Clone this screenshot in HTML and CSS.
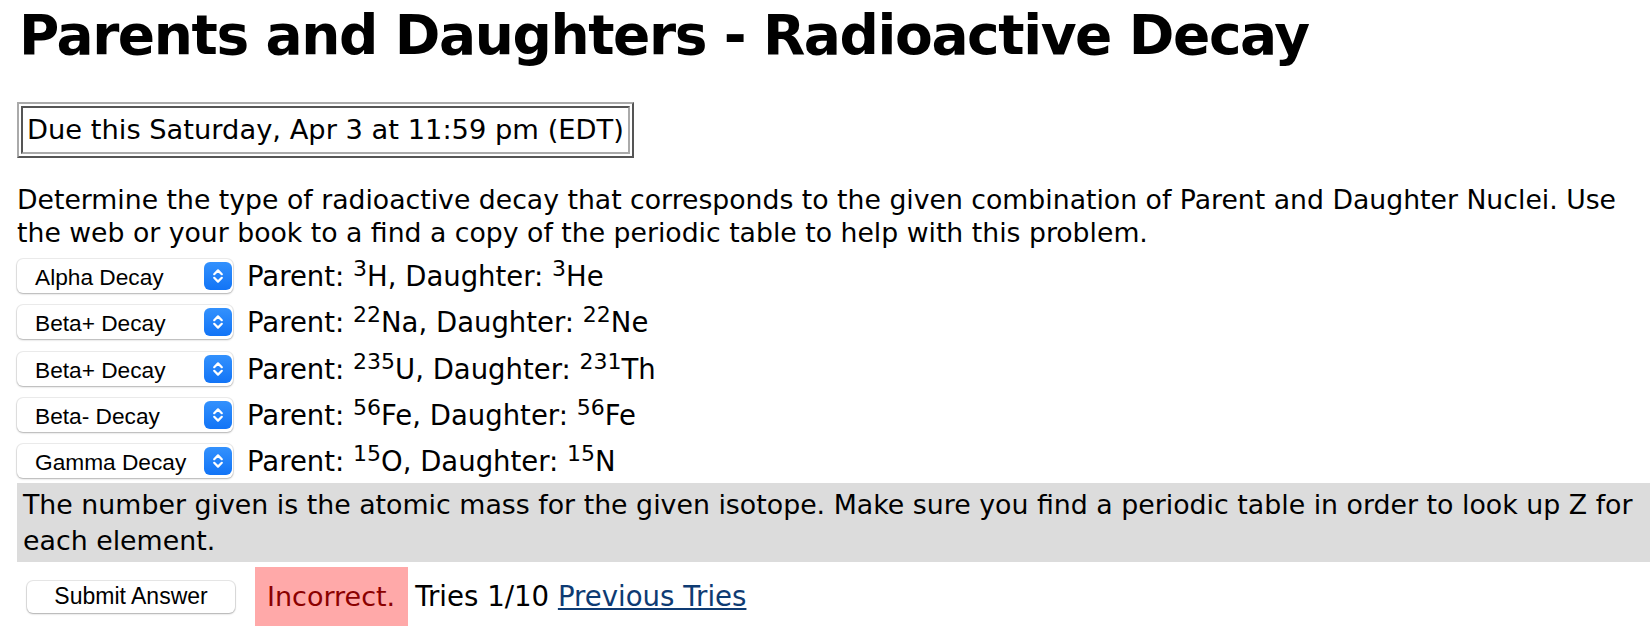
FILE: index.html
```html
<!DOCTYPE html>
<html>
<head>
<meta charset="utf-8">
<link rel="stylesheet" href="styles.css">
</head>
<body>
<h1 class="title">Parents and Daughters - Radioactive Decay</h1>
<table class="due"><tr><td class="due-cell">Due this Saturday, Apr 3 at 11:59 pm (EDT)</td></tr></table>
<p class="desc">Determine the type of radioactive decay that corresponds to the given combination of Parent and Daughter Nuclei. Use the web or your book to a find a copy of the periodic table to help with this problem.</p>
<div class="rows">
  <div class="row">
    <div class="sel"><span class="sel-text">Alpha Decay</span><span class="stepper"><svg width="16" height="20" viewBox="0 0 16 20"><path d="M4.2 8.2 L8 4.4 L11.8 8.2 M4.2 11.8 L8 15.6 L11.8 11.8" fill="none" stroke="#fff" stroke-width="2.2" stroke-linecap="round" stroke-linejoin="round"/></svg></span></div>
    <span class="q">Parent: <sup>3</sup>H, Daughter: <sup>3</sup>He</span>
  </div>
  <div class="row">
    <div class="sel"><span class="sel-text">Beta+ Decay</span><span class="stepper"><svg width="16" height="20" viewBox="0 0 16 20"><path d="M4.2 8.2 L8 4.4 L11.8 8.2 M4.2 11.8 L8 15.6 L11.8 11.8" fill="none" stroke="#fff" stroke-width="2.2" stroke-linecap="round" stroke-linejoin="round"/></svg></span></div>
    <span class="q">Parent: <sup>22</sup>Na, Daughter: <sup>22</sup>Ne</span>
  </div>
  <div class="row">
    <div class="sel"><span class="sel-text">Beta+ Decay</span><span class="stepper"><svg width="16" height="20" viewBox="0 0 16 20"><path d="M4.2 8.2 L8 4.4 L11.8 8.2 M4.2 11.8 L8 15.6 L11.8 11.8" fill="none" stroke="#fff" stroke-width="2.2" stroke-linecap="round" stroke-linejoin="round"/></svg></span></div>
    <span class="q">Parent: <sup>235</sup>U, Daughter: <sup>231</sup>Th</span>
  </div>
  <div class="row">
    <div class="sel"><span class="sel-text">Beta- Decay</span><span class="stepper"><svg width="16" height="20" viewBox="0 0 16 20"><path d="M4.2 8.2 L8 4.4 L11.8 8.2 M4.2 11.8 L8 15.6 L11.8 11.8" fill="none" stroke="#fff" stroke-width="2.2" stroke-linecap="round" stroke-linejoin="round"/></svg></span></div>
    <span class="q">Parent: <sup>56</sup>Fe, Daughter: <sup>56</sup>Fe</span>
  </div>
  <div class="row">
    <div class="sel"><span class="sel-text">Gamma Decay</span><span class="stepper"><svg width="16" height="20" viewBox="0 0 16 20"><path d="M4.2 8.2 L8 4.4 L11.8 8.2 M4.2 11.8 L8 15.6 L11.8 11.8" fill="none" stroke="#fff" stroke-width="2.2" stroke-linecap="round" stroke-linejoin="round"/></svg></span></div>
    <span class="q">Parent: <sup>15</sup>O, Daughter: <sup>15</sup>N</span>
  </div>
</div>
<div class="hint">The number given is the atomic mass for the given isotope. Make sure you find a periodic table in order to look up Z for each element.</div>
<div class="submit-row">
  <span class="btn">Submit Answer</span>
  <span class="bad">Incorrect.</span>
  <span class="tries">Tries 1/10 <a class="prev" href="#">Previous Tries</a></span>
</div>
</body>
</html>
```
FILE: styles.css
```css
html, body { margin: 0; padding: 0; background: #fff; }
body {
  font-family: "DejaVu Sans", Verdana, sans-serif;
  font-size: 27px;
  color: #000;
  padding-left: 17px;
  width: 1633px;
  overflow: hidden;
}
.title {
  font-size: 55px;
  letter-spacing: -1.4px;
  font-weight: bold;
  margin: 0;
  padding-top: 2px;
  line-height: 66px;
  padding-left: 2px;
}
.due {
  margin-top: 34px;
  border-collapse: separate;
  border-spacing: 2px;
  border: 2px solid;
  border-color: #aaa #555 #555 #aaa;
  font-size: 27.3px;
}
.due-cell {
  border: 2px solid;
  border-color: #555 #aaa #aaa #555;
  padding: 0 4px;
  line-height: 44px;
}
.desc {
  margin: 25px 0 0 0;
  font-size: 26.7px;
  line-height: 33px;
}
.rows { display: flex; flex-direction: column; gap: 12.3px; margin-top: 10px; }
.row { display: flex; align-items: center; gap: 14px; }
.sel {
  width: 216px;
  height: 34px;
  box-sizing: border-box;
  background: #fff;
  border-radius: 6px;
  box-shadow: 0 0 0 1px rgba(0,0,0,0.07), 0 1px 2px rgba(0,0,0,0.25);
  display: flex;
  align-items: center;
  justify-content: space-between;
  padding: 0 1px 0 18px;
  font-family: "Liberation Sans", Arial, sans-serif;
  font-size: 22.7px;
}
.sel-text { padding-top: 3px; }
.stepper {
  width: 28px;
  height: 28px;
  border-radius: 6px;
  background: linear-gradient(#3391fd, #1274f6);
  display: flex;
  align-items: center;
  justify-content: center;
}
.q { font-size: 27.5px; line-height: 34px; }
.q sup { font-size: 0.8em; line-height: 0; }
.hint {
  margin-top: 5px;
  background: #dcdcdc;
  font-size: 26.8px;
  line-height: 35.5px;
  padding: 4px 6px;
}
.submit-row { display: flex; align-items: center; margin-top: 5px; }
.btn {
  margin-left: 10px;
  width: 208px;
  height: 32px;
  box-sizing: border-box;
  display: flex;
  align-items: center;
  justify-content: center;
  border-radius: 6px;
  background: #fff;
  box-shadow: 0 0 0 1px rgba(0,0,0,0.09), 0 1px 2px rgba(0,0,0,0.25);
  font-family: "Liberation Sans", Arial, sans-serif;
  font-size: 23px;
}
.bad {
  margin-left: 20px;
  background: #ffa9a9;
  color: #8b0000;
  font-size: 27px;
  height: 59px;
  display: flex;
  align-items: center;
  padding: 0 13px 0 12px;
}
.tries { font-size: 27.6px; margin-left: 7px; }
.prev { color: #0e3b73; text-decoration: underline; }
```
